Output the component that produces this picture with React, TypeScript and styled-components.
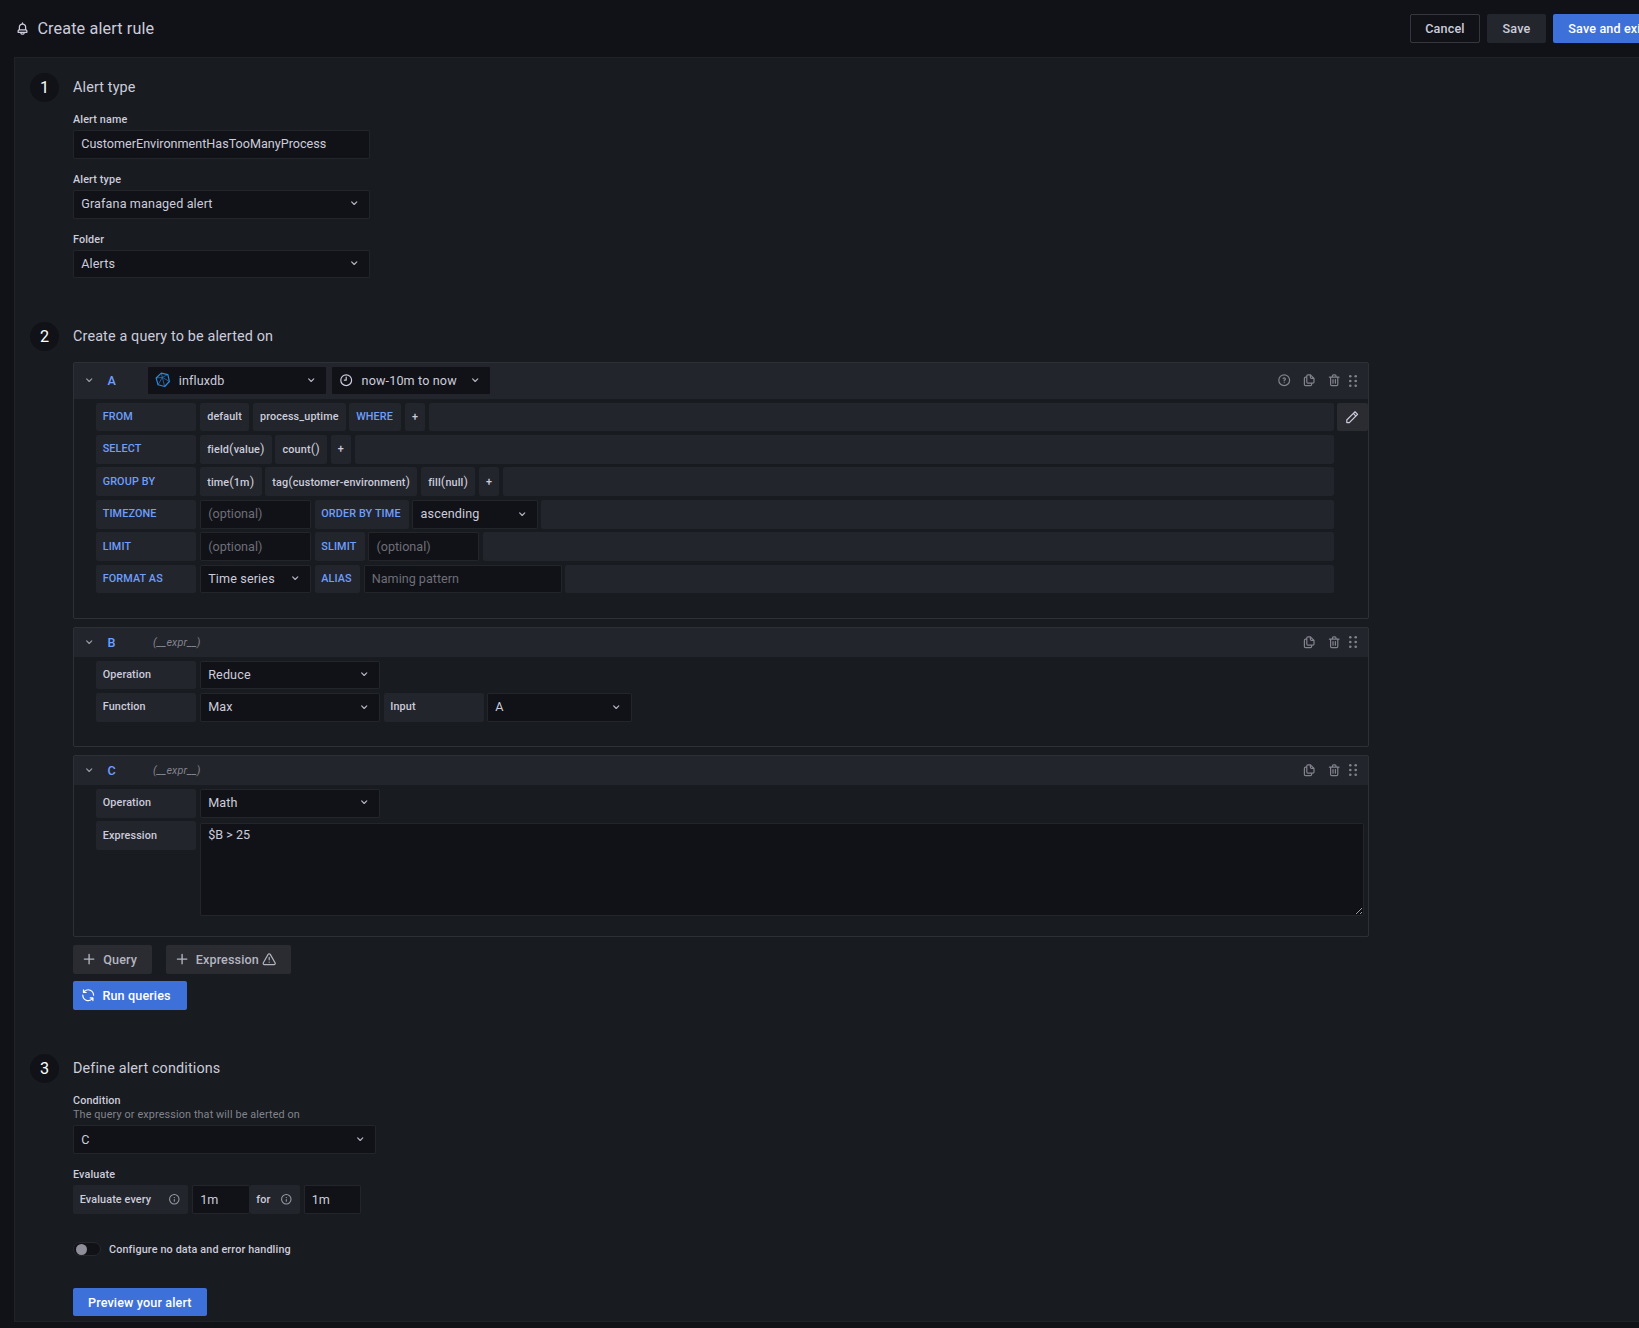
import React from 'react';
import styled, { createGlobalStyle } from 'styled-components';

const GlobalStyle = createGlobalStyle`
  html, body {
    margin: 0;
    height: 100%;
    overflow: hidden;
    background: #111217;
  }
  body {
    font-family: Roboto, "Liberation Sans", sans-serif;
    font-size: 12.6px;
    color: #ccccdc;
    letter-spacing: 0.01071em;
  }
  * { box-sizing: border-box; }
`;

const Page = styled.div`
  width: 1660.4px;
`;

const Header = styled.header`
  display: flex;
  align-items: center;
  height: 57px;
  padding: 0 0 1px 15px;
`;

const Title = styled.h1`
  flex: 1;
  display: flex;
  align-items: center;
  gap: 7.4px;
  margin: 0;
  font-size: 16.2px;
  font-weight: 400;
  color: #ccccdc;
`;

const Toolbar = styled.div`
  display: flex;
  gap: 7.2px;
`;

const Button = styled.button<{ $variant?: 'primary' | 'secondary' | 'outline' }>`
  display: inline-flex;
  align-items: center;
  gap: 7px;
  height: 29px;
  padding: 0 14.4px;
  border-radius: 2px;
  font: inherit;
  font-weight: 500;
  letter-spacing: inherit;
  white-space: nowrap;
  border: 1px solid ${({ $variant }) => ($variant === 'outline' ? 'rgba(204, 204, 220, 0.2)' : 'transparent')};
  background: ${({ $variant }) =>
    $variant === 'primary' ? '#3d71d9' : $variant === 'outline' ? 'transparent' : '#24262d'};
  color: ${({ $variant }) => ($variant === 'primary' ? '#ffffff' : '#ccccdc')};
`;

const RunButton = styled(Button)`
  padding: 0 15px 0 7px;
`;

const AddButton = styled(Button)`
  gap: 6px;
  padding: 0 14px 0 7px;
  color: #b4b5c0;
  background: #2a2c32;
`;

const WarningSlot = styled.span`
  display: flex;
  margin-left: -3px;
`;

const Panel = styled.main`
  margin-left: 14px;
  height: 1264.7px;
  padding: 14.7px 0 0 15px;
  background: #181b1f;
  border: 1px solid #202226;
`;

const Step = styled.section`
  display: flex;
  gap: 14px;
  margin-bottom: 44px;
  &:last-child { margin-bottom: 0; }
`;

const StepNumber = styled.div`
  flex: none;
  display: flex;
  align-items: center;
  justify-content: center;
  width: 29px;
  height: 29px;
  border-radius: 50%;
  background: #111217;
  color: #ffffff;
  font-size: 16.2px;
`;

const StepBody = styled.div`
  flex: 1;
  min-width: 0;
`;

const StepTitle = styled.h2`
  display: flex;
  align-items: center;
  height: 29px;
  margin: 0;
  font-size: 14.4px;
  font-weight: 400;
  color: #ccccdc;
`;

const Field = styled.div`
  margin-top: 13px;
  &:first-of-type { margin-top: 10.3px; }
`;

const FieldLabel = styled.label`
  display: block;
  height: 16px;
  margin-bottom: 2px;
  font-size: 10.8px;
  font-weight: 500;
  line-height: 16px;
  color: #ccccdc;
`;

const FieldDescription = styled.div`
  height: 14px;
  margin: -3px 0 3.3px;
  font-size: 10.8px;
  line-height: 14px;
  color: #82838d;
`;

const InputShell = styled.div<{ $width: number; $muted?: boolean }>`
  flex: none;
  display: flex;
  align-items: center;
  justify-content: space-between;
  width: ${({ $width }) => $width}px;
  height: 28.8px;
  padding: 0 7.2px 1px;
  background: #111217;
  border: 1px solid rgba(204, 204, 220, 0.1);
  border-radius: 2px;
  color: ${({ $muted }) => ($muted ? '#6d6e77' : '#ccccdc')};
  letter-spacing: 0;
  white-space: nowrap;
`;

const SelectLead = styled.span`
  display: flex;
  align-items: center;
  gap: 8px;
  letter-spacing: 0.01071em;
`;

const ChevronSlot = styled.span`
  display: flex;
  color: #b4b5c0;
`;

const QueryBox = styled.div`
  width: 1296px;
  margin-top: 8.3px;
  border: 1px solid rgba(204, 204, 220, 0.12);
  border-radius: 2px;
  &:first-of-type { margin-top: 10.9px; }
`;

const QueryHeader = styled.div<{ $tall?: boolean }>`
  display: flex;
  align-items: center;
  padding: ${({ $tall }) => ($tall ? '3px 0 4px' : '0 0 1px')};
  min-height: 28.8px;
  background: #22252b;
`;

const QueryName = styled.div<{ $width: number }>`
  flex: none;
  display: flex;
  align-items: center;
  gap: 11.5px;
  width: ${({ $width }) => $width}px;
  padding-left: 7.6px;
  font-weight: 500;
  color: #6e9fff;
`;

const CollapseIcon = styled.span`
  display: flex;
  color: #9a9ba5;
`;

const HeaderSelects = styled.div`
  display: flex;
  gap: 4px;
`;

const ExprTag = styled.em`
  font-size: 10.8px;
  color: #82838d;
`;

const HeaderActions = styled.div`
  margin-left: auto;
  display: flex;
  align-items: center;
  gap: 10.6px;
  padding-right: 11px;
  color: #82838d;
`;

const DragHandle = styled.svg`
  margin-left: -3px;
`;

const QueryBody = styled.div<{ $bottom: number }>`
  display: flex;
  gap: 3px;
  padding: 3.6px 4px ${({ $bottom }) => $bottom}px 22px;
`;

const InfluxBody = styled(QueryBody)`
  padding-right: 0;
`;

const Rows = styled.div`
  flex: 1;
  min-width: 0;
  display: flex;
  flex-direction: column;
  gap: 3.6px;
`;

const Row = styled.div`
  display: flex;
  gap: 3.6px;
  height: 28.8px;
`;

const TallRow = styled(Row)`
  height: auto;
  align-items: flex-start;
`;

const Cell = styled.div`
  flex: none;
  display: flex;
  align-items: center;
  height: 28.8px;
  padding: 0 7.2px 1px 6.7px;
  background: #22252b;
  border-radius: 2px;
  font-size: 10.8px;
  font-weight: 500;
  white-space: nowrap;
`;

const KeywordCell = styled(Cell)<{ $width?: number }>`
  width: ${({ $width }) => ($width ? `${$width}px` : 'auto')};
  padding-right: 8.2px;
  color: #6e9fff;
`;

const TokenCell = styled(Cell)`
  padding-left: 7.2px;
  color: #ccccdc;
`;

// the function brackets in the query editor sit a size above their text
const Paren = styled.span`
  font-size: 13px;
  font-weight: 400;
`;

const NameCell = styled(Cell)<{ $width: number }>`
  width: ${({ $width }) => $width}px;
  color: #ccccdc;
`;

const Filler = styled.div`
  flex: 1;
  height: 28.8px;
  background: #22252b;
  border-radius: 2px;
`;

const EditButton = styled.button`
  flex: none;
  display: flex;
  align-items: center;
  justify-content: center;
  width: 31px;
  height: 28.8px;
  padding: 0;
  border: none;
  border-radius: 2px;
  background: #2a2c32;
  color: #ccccdc;
`;

const ExpressionArea = styled.textarea`
  flex: 1;
  display: block;
  height: 93px;
  margin-top: 1.5px;
  padding: 3px 7.2px;
  font: inherit;
  letter-spacing: 0;
  color: #ccccdc;
  background: #111217;
  border: 1px solid rgba(204, 204, 220, 0.1);
  border-radius: 2px;
  outline: none;
`;

const QueryActions = styled.div`
  display: flex;
  gap: 13.5px;
  margin-top: 7.7px;
`;

const RunRow = styled.div`
  margin-top: 7px;
`;

const EvaluateRow = styled.div`
  display: flex;
  align-items: center;
`;

const EvalLabel = styled(Cell)<{ $width: number; $end?: number }>`
  justify-content: space-between;
  width: ${({ $width }) => $width}px;
  margin-right: ${({ $end }) => $end ?? 0}px;
  color: #ccccdc;
`;

const InfoIcon = styled.span`
  display: flex;
  color: #9a9ba5;
`;

const SwitchRow = styled.div`
  display: flex;
  align-items: center;
  gap: 8px;
  margin-top: 28px;
  font-size: 10.8px;
  font-weight: 500;
`;

const SwitchTrack = styled.span`
  display: flex;
  align-items: center;
  width: 28px;
  height: 14px;
  padding-left: 1.5px;
  background: #111217;
  border: 1px solid #26282e;
  border-radius: 7px;
`;

const SwitchKnob = styled.span`
  width: 11px;
  height: 11px;
  border-radius: 50%;
  background: #8e8f99;
`;

const PreviewRow = styled.div`
  margin-top: 32px;
`;

const PreviewButton = styled(Button)`
  height: 28px;
  padding: 0 14px;
`;

// unicons outlines, the same set the reference draws with
const icons = {
  bell: 'M18,13.18V10a6,6,0,0,0-5-5.91V3a1,1,0,0,0-2,0V4.09A6,6,0,0,0,6,10v3.18A3,3,0,0,0,4,16v2a1,1,0,0,0,1,1H8.14a4,4,0,0,0,7.72,0H19a1,1,0,0,0,1-1V16A3,3,0,0,0,18,13.18ZM8,10a4,4,0,0,1,8,0v3H8Zm4,10a2,2,0,0,1-1.72-1h3.44A2,2,0,0,1,12,20Zm6-3H6V16a1,1,0,0,1,1-1H17a1,1,0,0,1,1,1Z',
  trash: 'M10,18a1,1,0,0,0,1-1V11a1,1,0,0,0-2,0v6A1,1,0,0,0,10,18ZM20,6H16V5a3,3,0,0,0-3-3H11A3,3,0,0,0,8,5V6H4A1,1,0,0,0,4,8H5V19a3,3,0,0,0,3,3h8a3,3,0,0,0,3-3V8h1a1,1,0,0,0,0-2ZM10,5a1,1,0,0,1,1-1h2a1,1,0,0,1,1,1V6H10Zm7,14a1,1,0,0,1-1,1H8a1,1,0,0,1-1-1V8H17Zm-3-1a1,1,0,0,0,1-1V11a1,1,0,0,0-2,0v6A1,1,0,0,0,14,18Z',
  copy: 'M21,8.94a1.31,1.31,0,0,0-.06-.27l0-.09a1.07,1.07,0,0,0-.19-.28h0l-6-6h0a1.07,1.07,0,0,0-.28-.19.32.32,0,0,0-.09,0A.88.88,0,0,0,14.05,2H10A3,3,0,0,0,7,5V6H6A3,3,0,0,0,3,9V19a3,3,0,0,0,3,3h8a3,3,0,0,0,3-3V18h1a3,3,0,0,0,3-3V9S21,9,21,8.94ZM15,5.41,17.59,8H16a1,1,0,0,1-1-1ZM15,19a1,1,0,0,1-1,1H6a1,1,0,0,1-1-1V9A1,1,0,0,1,6,8H7v7a3,3,0,0,0,3,3h5Zm4-4a1,1,0,0,1-1,1H10a1,1,0,0,1-1-1V5a1,1,0,0,1,1-1h3V7a3,3,0,0,0,3,3h3Z',
  help: 'M11.29,15.29a1.58,1.58,0,0,0-.12.15.76.76,0,0,0-.09.18.64.64,0,0,0-.06.18,1.36,1.36,0,0,0,0,.2.84.84,0,0,0,.08.38.9.9,0,0,0,.54.54.94.94,0,0,0,.76,0,.9.9,0,0,0,.54-.54A1,1,0,0,0,13,16a1,1,0,0,0-.29-.71A1,1,0,0,0,11.29,15.29ZM12,2A10,10,0,1,0,22,12,10,10,0,0,0,12,2Zm0,18a8,8,0,1,1,8-8A8,8,0,0,1,12,20ZM12,7A3,3,0,0,0,9.4,8.5a1,1,0,1,0,1.73,1A1,1,0,0,1,12,9a1,1,0,0,1,0,2,1,1,0,0,0-1,1v1a1,1,0,0,0,2,0v-.18A3,3,0,0,0,12,7Z',
  pen: 'M22,7.24a1,1,0,0,0-.29-.71L17.47,2.29A1,1,0,0,0,16.76,2a1,1,0,0,0-.71.29L13.22,5.12h0L2.29,16.05a1,1,0,0,0-.29.71V21a1,1,0,0,0,1,1H7.24A1,1,0,0,0,8,21.71L18.87,10.78h0L21.71,8a1.19,1.19,0,0,0,.22-.33,1,1,0,0,0,0-.24.7.7,0,0,0,0-.14ZM6.83,20H4V17.17l9.93-9.93,2.83,2.83ZM18.17,8.66,15.34,5.83l1.42-1.41,2.82,2.82Z',
  info: 'M12,2A10,10,0,1,0,22,12,10,10,0,0,0,12,2Zm0,18a8,8,0,1,1,8-8A8,8,0,0,1,12,20Zm0-8.5a1,1,0,0,0-1,1v3a1,1,0,0,0,2,0v-3A1,1,0,0,0,12,11.5Zm0-4a1.25,1.25,0,1,0,1.25,1.25A1.25,1.25,0,0,0,12,7.5Z',
  clock: 'M12,2A10,10,0,1,0,22,12,10,10,0,0,0,12,2Zm0,18a8,8,0,1,1,8-8A8,8,0,0,1,12,20ZM12,6a1,1,0,0,0-1,1v4H9a1,1,0,0,0,0,2h3a1,1,0,0,0,1-1V7A1,1,0,0,0,12,6Z',
  warning: 'M12,16a1,1,0,1,0,1,1A1,1,0,0,0,12,16Zm10.67,1.47-8.05-14a3,3,0,0,0-5.24,0l-8,14A3,3,0,0,0,3.94,22H20.06a3,3,0,0,0,2.61-4.53Zm-1.73,2a1,1,0,0,1-.88.51H3.94a1,1,0,0,1-.88-.51,1,1,0,0,1,0-1l8-14a1,1,0,0,1,1.78,0l8.05,14A1,1,0,0,1,20.94,19.49ZM12,8a1,1,0,0,0-1,1v4a1,1,0,0,0,2,0V9A1,1,0,0,0,12,8Z',
  sync: 'M19.91,15.51H15.38a1,1,0,0,0,0,2h2.4A8,8,0,0,1,4,12a1,1,0,0,0-2,0,10,10,0,0,0,16.88,7.23V21a1,1,0,0,0,2,0V16.5A1,1,0,0,0,19.91,15.51ZM12,2A10,10,0,0,0,5.12,4.77V3a1,1,0,0,0-2,0V7.5a1,1,0,0,0,1,1h4.5a1,1,0,0,0,0-2H6.22A8,8,0,0,1,20,12a1,1,0,0,0,2,0A10,10,0,0,0,12,2Z',
  plus: 'M19,11H13V5a1,1,0,0,0-2,0v6H5a1,1,0,0,0,0,2h6v6a1,1,0,0,0,2,0V13h6a1,1,0,0,0,0-2Z',
  angle: 'M17,9.17a1,1,0,0,0-1.41,0L12,12.71,8.46,9.17a1,1,0,0,0-1.41,0,1,1,0,0,0,0,1.42l4.24,4.24a1,1,0,0,0,1.42,0L17,10.59A1,1,0,0,0,17,9.17Z',
};

function Icon({ name, size = 14.4 }: { name: keyof typeof icons; size?: number }) {
  return (
    <svg width={size} height={size} viewBox="0 0 24 24" fill="currentColor">
      <path d={icons[name]} />
    </svg>
  );
}

function DragDots() {
  return (
    <DragHandle width="8" height="12" viewBox="0 0 8 12" fill="currentColor">
      {[1.3, 6.7].map(x => [1.3, 6, 10.7].map(y => <circle key={`${x}-${y}`} cx={x} cy={y} r="1.3" />))}
    </DragHandle>
  );
}

function InfluxIcon() {
  return (
    <svg width="15.5" height="16" viewBox="0 0 14 15" fill="none" stroke="#2f86d8" strokeWidth="1.1" strokeLinejoin="round">
      <path d="M5.6 1 11.8 2.4 13.2 8.9 8.8 13.6 2.6 12 .8 5.6Z" />
      <path d="M5.6 1 6.6 5 11.8 2.4M6.6 5 .8 5.6M6.6 5 2.6 12M6.6 5 13.2 8.9M6.6 5 8.8 13.6" strokeWidth="0.6" />
    </svg>
  );
}

function Select({ value, width, lead }: { value: string; width: number; lead?: React.ReactNode }) {
  return (
    <InputShell $width={width}>
      <SelectLead>
        {lead}
        {value}
      </SelectLead>
      <ChevronSlot>
        <Icon name="angle" />
      </ChevronSlot>
    </InputShell>
  );
}

function QueryTools({ help }: { help?: boolean }) {
  return (
    <HeaderActions>
      {help && <Icon name="help" />}
      <Icon name="copy" />
      <Icon name="trash" />
      <DragDots />
    </HeaderActions>
  );
}

function QueryTitle({ refId, width }: { refId: string; width: number }) {
  return (
    <QueryName $width={width}>
      <CollapseIcon>
        <Icon name="angle" />
      </CollapseIcon>
      {refId}
    </QueryName>
  );
}

function FuncToken({ name, arg = '' }: { name: string; arg?: string }) {
  return (
    <TokenCell>
      <span>
        {name}
        <Paren>(</Paren>
        {arg}
        <Paren>)</Paren>
      </span>
    </TokenCell>
  );
}

export default function App() {
  return (
    <Page>
      <GlobalStyle />
      <Header>
        <Title>
          <Icon name="bell" size={15} />
          Create alert rule
        </Title>
        <Toolbar>
          <Button $variant="outline">Cancel</Button>
          <Button $variant="secondary">Save</Button>
          <Button $variant="primary">Save and exit</Button>
        </Toolbar>
      </Header>

      <Panel>
        <Step>
          <StepNumber>1</StepNumber>
          <StepBody>
            <StepTitle>Alert type</StepTitle>
            <Field>
              <FieldLabel>Alert name</FieldLabel>
              <InputShell $width={296.6}>CustomerEnvironmentHasTooManyProcess</InputShell>
            </Field>
            <Field>
              <FieldLabel>Alert type</FieldLabel>
              <Select value="Grafana managed alert" width={296.6} />
            </Field>
            <Field>
              <FieldLabel>Folder</FieldLabel>
              <Select value="Alerts" width={296.6} />
            </Field>
          </StepBody>
        </Step>

        <Step>
          <StepNumber>2</StepNumber>
          <StepBody>
            <StepTitle>Create a query to be alerted on</StepTitle>

            <QueryBox>
              <QueryHeader $tall>
                <QueryTitle refId="A" width={73} />
                <HeaderSelects>
                  <Select value="influxdb" width={180} lead={<InfluxIcon />} />
                  <Select value="now-10m to now" width={159.6} lead={<Icon name="clock" />} />
                </HeaderSelects>
                <QueryTools help />
              </QueryHeader>
              <InfluxBody $bottom={24.5}>
                <Rows>
                  <Row>
                    <KeywordCell $width={100.4}>FROM</KeywordCell>
                    <TokenCell>default</TokenCell>
                    <TokenCell>process_uptime</TokenCell>
                    <KeywordCell>WHERE</KeywordCell>
                    <TokenCell>+</TokenCell>
                    <Filler />
                  </Row>
                  <Row>
                    <KeywordCell $width={100.4}>SELECT</KeywordCell>
                    <FuncToken name="field" arg="value" />
                    <FuncToken name="count" />
                    <TokenCell>+</TokenCell>
                    <Filler />
                  </Row>
                  <Row>
                    <KeywordCell $width={100.4}>GROUP BY</KeywordCell>
                    <FuncToken name="time" arg="1m" />
                    <FuncToken name="tag" arg="customer-environment" />
                    <FuncToken name="fill" arg="null" />
                    <TokenCell>+</TokenCell>
                    <Filler />
                  </Row>
                  <Row>
                    <KeywordCell $width={100.4}>TIMEZONE</KeywordCell>
                    <InputShell $width={111} $muted>(optional)</InputShell>
                    <KeywordCell>ORDER BY TIME</KeywordCell>
                    <Select value="ascending" width={125.4} />
                    <Filler />
                  </Row>
                  <Row>
                    <KeywordCell $width={100.4}>LIMIT</KeywordCell>
                    <InputShell $width={111} $muted>(optional)</InputShell>
                    <KeywordCell>SLIMIT</KeywordCell>
                    <InputShell $width={111} $muted>(optional)</InputShell>
                    <Filler />
                  </Row>
                  <Row>
                    <KeywordCell $width={100.4}>FORMAT AS</KeywordCell>
                    <Select value="Time series" width={111} />
                    <KeywordCell>ALIAS</KeywordCell>
                    <InputShell $width={198} $muted>Naming pattern</InputShell>
                    <Filler />
                  </Row>
                </Rows>
                <EditButton>
                  <Icon name="pen" />
                </EditButton>
              </InfluxBody>
            </QueryBox>

            <QueryBox>
              <QueryHeader>
                <QueryTitle refId="B" width={79} />
                <ExprTag>(__expr__)</ExprTag>
                <QueryTools />
              </QueryHeader>
              <QueryBody $bottom={24.3}>
                <Rows>
                  <Row>
                    <NameCell $width={100.4}>Operation</NameCell>
                    <Select value="Reduce" width={180} />
                  </Row>
                  <Row>
                    <NameCell $width={100.4}>Function</NameCell>
                    <Select value="Max" width={180} />
                    <NameCell $width={100}>Input</NameCell>
                    <Select value="A" width={144.5} />
                  </Row>
                </Rows>
              </QueryBody>
            </QueryBox>

            <QueryBox>
              <QueryHeader>
                <QueryTitle refId="C" width={79} />
                <ExprTag>(__expr__)</ExprTag>
                <QueryTools />
              </QueryHeader>
              <QueryBody $bottom={20.5}>
                <Rows>
                  <Row>
                    <NameCell $width={100.4}>Operation</NameCell>
                    <Select value="Math" width={180} />
                  </Row>
                  <TallRow>
                    <NameCell $width={100.4}>Expression</NameCell>
                    <ExpressionArea defaultValue="$B > 25" />
                  </TallRow>
                </Rows>
              </QueryBody>
            </QueryBox>

            <QueryActions>
              <AddButton>
                <Icon name="plus" size={16.2} />
                Query
              </AddButton>
              <AddButton>
                <Icon name="plus" size={16.2} />
                <span>Expression</span>
                <WarningSlot>
                  <Icon name="warning" />
                </WarningSlot>
              </AddButton>
            </QueryActions>
            <RunRow>
              <RunButton $variant="primary">
                <Icon name="sync" />
                Run queries
              </RunButton>
            </RunRow>
          </StepBody>
        </Step>

        <Step>
          <StepNumber>3</StepNumber>
          <StepBody>
            <StepTitle>Define alert conditions</StepTitle>
            <Field>
              <FieldLabel>Condition</FieldLabel>
              <FieldDescription>The query or expression that will be alerted on</FieldDescription>
              <Select value="C" width={303} />
            </Field>
            <Field>
              <FieldLabel>Evaluate</FieldLabel>
              <EvaluateRow>
                <EvalLabel $width={115} $end={4}>
                  Evaluate every
                  <InfoIcon>
                    <Icon name="info" size={12.6} />
                  </InfoIcon>
                </EvalLabel>
                <InputShell $width={57.5}>1m</InputShell>
                <EvalLabel $width={50.5} $end={3.6}>
                  for
                  <InfoIcon>
                    <Icon name="info" size={12.6} />
                  </InfoIcon>
                </EvalLabel>
                <InputShell $width={57.5}>1m</InputShell>
              </EvaluateRow>
            </Field>
            <SwitchRow>
              <SwitchTrack>
                <SwitchKnob />
              </SwitchTrack>
              Configure no data and error handling
            </SwitchRow>
            <PreviewRow>
              <PreviewButton $variant="primary">Preview your alert</PreviewButton>
            </PreviewRow>
          </StepBody>
        </Step>
      </Panel>
    </Page>
  );
}
